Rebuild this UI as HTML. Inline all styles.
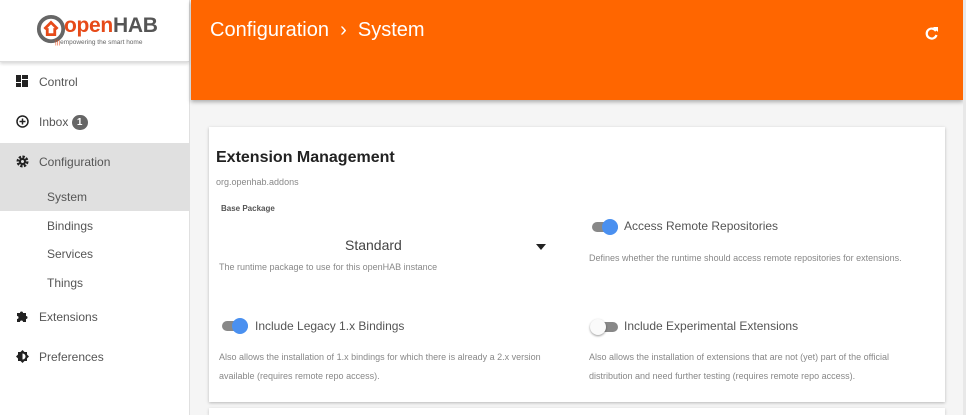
<!DOCTYPE html>
<html style="width:966px;height:415px;overflow:hidden"><head><style>
*{margin:0;padding:0;box-sizing:border-box}
body{width:966px;height:415px;overflow:hidden;background:#f5f5f5;font-family:"Liberation Sans",sans-serif;position:relative;color:#333}
.side{position:absolute;left:0;top:0;width:190px;height:415px;background:#fff;border-right:1px solid #e0e0e0}
.logo{height:62px;border-bottom:1px solid #ddd;box-shadow:0 2px 3px rgba(0,0,0,.15);position:relative}
.it{position:absolute;left:0;width:190px;font-size:12px;color:#555}
.it svg{position:absolute;left:16px}
.it span{position:absolute;left:39px}
.sub{position:absolute;left:47px;font-size:12px;color:#555}
.hdr{position:absolute;left:191px;top:0;width:772px;height:100px;background:#ff6600;box-shadow:0 2px 4px rgba(0,0,0,.3)}
.hdr h1{position:absolute;left:19px;top:19px;font-weight:normal;font-size:20px;color:#fff}
.card{position:absolute;left:209px;top:127px;width:736px;height:275px;background:#fff;box-shadow:0 1px 3px rgba(0,0,0,.25)}
.t{position:absolute;font-size:12px;color:#555}
.d{position:absolute;font-size:9px;color:#888;line-height:19px}
.tg{position:absolute;width:26px;height:10px;border-radius:5px;background:#888}
.tg i{position:absolute;top:-3px;width:16px;height:16px;border-radius:50%}
</style></head><body>
<div class="side">
 <div class="logo">
  <svg style="position:absolute;left:36px;top:14px" width="30" height="30" viewBox="0 0 32 32"><circle cx="16" cy="16" r="13" fill="none" stroke="#666" stroke-width="4"/><path d="M9 16 L16 9 L23 16 M12 15 V22 H20 V15" fill="none" stroke="#e64a19" stroke-width="3"/></svg>
  <div style="position:absolute;left:64px;top:14px;font-size:21px;font-weight:bold;letter-spacing:-0.3px"><span style="color:#e64a19">open</span><span style="color:#555">HAB</span></div>
  <div style="position:absolute;left:55px;top:39px;font-size:6.5px;color:#666"><span style="color:#e64a19">|||</span>empowering the smart home</div>
 </div>
 <div class="it" style="top:75px"><svg width="12" height="12" viewBox="0 0 12 12"><rect x="0" y="0" width="5" height="7" fill="#222"/><rect x="6" y="0" width="6" height="4" fill="#222"/><rect x="0" y="8" width="5" height="4" fill="#222"/><rect x="6" y="5" width="6" height="7" fill="#222"/></svg><span>Control</span></div>
 <div class="it" style="top:115px"><svg width="13" height="13" viewBox="0 0 13 13"><circle cx="6.5" cy="6.5" r="5.5" fill="none" stroke="#222" stroke-width="1.5"/><path d="M6.5 3.5V9.5M3.5 6.5H9.5" stroke="#222" stroke-width="1.5"/></svg><span>Inbox <b style="display:inline-block;background:#666;color:#fff;border-radius:8px;width:16px;height:15px;text-align:center;font-size:10px;line-height:15px;vertical-align:middle">1</b></span></div>
 <div style="position:absolute;left:0;top:143px;width:190px;height:68px;background:#e0e0e0"></div>
 <div class="it" style="top:155px"><svg width="13" height="13" viewBox="0 0 13 13"><circle cx="6.5" cy="6.5" r="4.5" fill="none" stroke="#222" stroke-width="3" stroke-dasharray="2.2 1.3"/><circle cx="6.5" cy="6.5" r="3.5" fill="#222"/><circle cx="6.5" cy="6.5" r="1.5" fill="#e0e0e0"/></svg><span>Configuration</span></div>
 <div class="sub" style="top:190px">System</div>
 <div class="sub" style="top:219px">Bindings</div>
 <div class="sub" style="top:247px">Services</div>
 <div class="sub" style="top:276px">Things</div>
 <div class="it" style="top:310px"><svg width="13" height="13" viewBox="0 0 13 13"><path d="M1 3H4a1.5 1.5 0 1 1 3 0H10V6a1.5 1.5 0 1 1 0 3V12H7a1.5 1.5 0 1 0-3 0H1V9a1.5 1.5 0 1 0 0-3Z" fill="#222"/></svg><span>Extensions</span></div>
 <div class="it" style="top:350px"><svg width="13" height="13" viewBox="0 0 13 13"><path d="M6.5 0L8.5 2H11V4.5L13 6.5L11 8.5V11H8.5L6.5 13L4.5 11H2V8.5L0 6.5L2 4.5V2H4.5Z" fill="#222"/><path d="M6.5 3.5A3 3 0 0 1 6.5 9.5Z" fill="#fff"/></svg><span>Preferences</span></div>
</div>
<div class="hdr"><h1>Configuration &nbsp;›&nbsp; System</h1>
 <svg style="position:absolute;left:733px;top:26px" width="15" height="15" viewBox="0 0 15 15"><path d="M12 5A5 5 0 1 0 12.5 9" fill="none" stroke="#fff" stroke-width="2.2"/><path d="M9 1L14 1L14 6Z" fill="#fff"/></svg>
</div>
<div style="position:absolute;left:963px;top:0;width:3px;height:415px;background:#e8e8e8"></div>
<div class="card">
 <div style="position:absolute;left:7px;top:22px;font-size:16px;font-weight:bold;color:#222">Extension Management</div>
 <div class="d" style="left:7px;top:46px;color:#888">org.openhab.addons</div>
 <div style="position:absolute;left:12px;top:77px;font-size:8px;font-weight:bold;color:#555">Base Package</div>
 <div style="position:absolute;left:136px;top:110px;font-size:14px;color:#444">Standard</div>
 <div style="position:absolute;left:327px;top:117px;width:0;height:0;border-left:5px solid transparent;border-right:5px solid transparent;border-top:6px solid #222"></div>
 <div class="d" style="left:10px;top:131px">The runtime package to use for this openHAB instance</div>
 <div class="tg" style="left:383px;top:95px"><i style="left:10px;background:#4a90f0"></i></div>
 <div class="t" style="left:415px;top:92px">Access Remote Repositories</div>
 <div class="d" style="left:380px;top:122px">Defines whether the runtime should access remote repositories for extensions.</div>
 <div class="tg" style="left:13px;top:194px"><i style="left:10px;background:#4a90f0"></i></div>
 <div class="t" style="left:46px;top:192px">Include Legacy 1.x Bindings</div>
 <div class="d" style="left:10px;top:221px">Also allows the installation of 1.x bindings for which there is already a 2.x version<br>available (requires remote repo access).</div>
 <div class="tg" style="left:383px;top:195px"><i style="left:-2px;background:#fafafa;box-shadow:0 1px 2px rgba(0,0,0,.4)"></i></div>
 <div class="t" style="left:415px;top:192px">Include Experimental Extensions</div>
 <div class="d" style="left:380px;top:221px">Also allows the installation of extensions that are not (yet) part of the official<br>distribution and need further testing (requires remote repo access).</div>
</div>
<div style="position:absolute;left:209px;top:408px;width:736px;height:7px;background:#fff;box-shadow:0 1px 3px rgba(0,0,0,.2)"></div>
</body></html>
